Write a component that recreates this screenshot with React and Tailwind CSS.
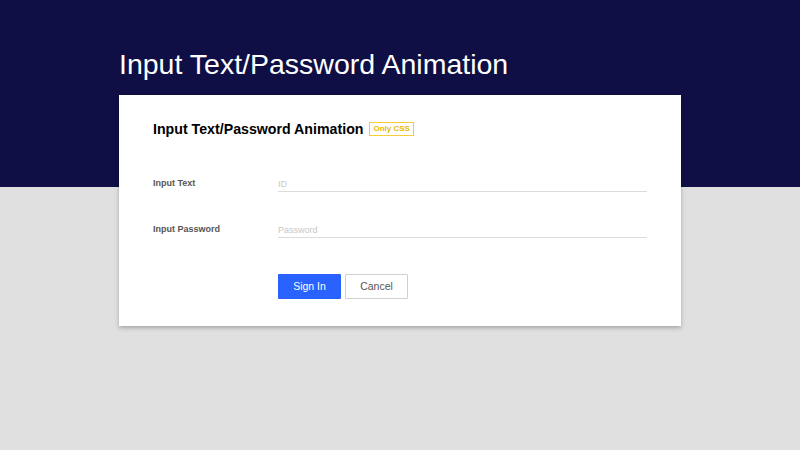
export default function App() {
  return (
    <div
      className="relative w-[800px] h-[450px] bg-[#e0e0e0] overflow-hidden"
      style={{ fontFamily: '"Liberation Sans", Arial, sans-serif' }}
    >
      <div className="h-[187px] bg-[#0f0f45]" />
      <div className="absolute inset-x-0 top-0 flex flex-col items-start pl-[119px] pt-[45px]">
        <h1 className="text-[28.5px] leading-[38px] text-white font-normal">
          Input Text/Password Animation
        </h1>
        <div className="mt-[12px] w-[562px] h-[231px] bg-white shadow-[0_2px_4px_rgba(0,0,0,0.25)] px-[34px] pt-[26px]">
          <div className="flex items-center h-[16px]">
            <h2 className="text-[14.2px] font-bold text-black leading-[16px]">
              Input Text/Password Animation
            </h2>
            <span className="ml-[6px] h-[14px] px-[3px] border border-[#f5cd3a] text-[#e8b800] text-[8px] font-bold leading-[12px]">
              Only CSS
            </span>
          </div>
          <div className="mt-[35px] flex items-end">
            <label className="w-[125px] text-[9px] font-bold text-[#555] leading-[12px] pb-[3px]">
              Input Text
            </label>
            <div className="w-[369px] border-b border-[#dcdcdc] h-[20px] flex items-end pb-[1px]">
              <span className="text-[9px] text-[#c8c8c8] leading-[12px]">ID</span>
            </div>
          </div>
          <div className="mt-[26px] flex items-end">
            <label className="w-[125px] text-[9px] font-bold text-[#555] leading-[12px] pb-[3px]">
              Input Password
            </label>
            <div className="w-[369px] border-b border-[#dcdcdc] h-[20px] flex items-end pb-[1px]">
              <span className="text-[9px] text-[#c8c8c8] leading-[12px]">Password</span>
            </div>
          </div>
          <div className="mt-[36px] ml-[125px] flex gap-[4px]">
            <button className="w-[63px] h-[25px] bg-[#2962ff] text-white text-[10.5px] rounded-[1px]">
              Sign In
            </button>
            <button className="w-[63px] h-[25px] bg-white border border-[#cfcfcf] text-[#555] text-[10.5px] rounded-[1px]">
              Cancel
            </button>
          </div>
        </div>
      </div>
    </div>
  );
}
